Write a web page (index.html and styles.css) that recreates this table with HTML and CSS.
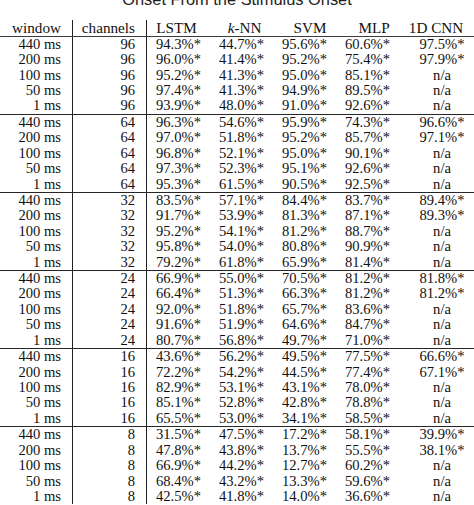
FILE: index.html
```html
<!DOCTYPE html>
<html>
<head>
<meta charset="utf-8">
<link rel="stylesheet" href="styles.css">
</head>
<body>
<div class="title">Onset From the Stimulus Onset</div>
<div class="table">
  <div class="row head">
    <div class="c1">window</div><div class="c2">channels</div>
    <div class="h h1">LSTM</div><div class="h h2"><i>k</i>-NN</div><div class="h h3">SVM</div><div class="h h4">MLP</div><div class="h h5">1D CNN</div>
  </div>
  <div class="group first">
    <div class="row"><div class="c1">440 ms</div><div class="c2">96</div><div class="v">94.3%*</div><div class="v">44.7%*</div><div class="v">95.6%*</div><div class="v">60.6%*</div><div class="cnn">97.5%*</div></div>
    <div class="row"><div class="c1">200 ms</div><div class="c2">96</div><div class="v">96.0%*</div><div class="v">41.4%*</div><div class="v">95.2%*</div><div class="v">75.4%*</div><div class="cnn">97.9%*</div></div>
    <div class="row"><div class="c1">100 ms</div><div class="c2">96</div><div class="v">95.2%*</div><div class="v">41.3%*</div><div class="v">95.0%*</div><div class="v">85.1%*</div><div class="cnn">n/a</div></div>
    <div class="row"><div class="c1">50 ms</div><div class="c2">96</div><div class="v">97.4%*</div><div class="v">41.3%*</div><div class="v">94.9%*</div><div class="v">89.5%*</div><div class="cnn">n/a</div></div>
    <div class="row"><div class="c1">1 ms</div><div class="c2">96</div><div class="v">93.9%*</div><div class="v">48.0%*</div><div class="v">91.0%*</div><div class="v">92.6%*</div><div class="cnn">n/a</div></div>
  </div>
  <div class="group">
    <div class="row"><div class="c1">440 ms</div><div class="c2">64</div><div class="v">96.3%*</div><div class="v">54.6%*</div><div class="v">95.9%*</div><div class="v">74.3%*</div><div class="cnn">96.6%*</div></div>
    <div class="row"><div class="c1">200 ms</div><div class="c2">64</div><div class="v">97.0%*</div><div class="v">51.8%*</div><div class="v">95.2%*</div><div class="v">85.7%*</div><div class="cnn">97.1%*</div></div>
    <div class="row"><div class="c1">100 ms</div><div class="c2">64</div><div class="v">96.8%*</div><div class="v">52.1%*</div><div class="v">95.0%*</div><div class="v">90.1%*</div><div class="cnn">n/a</div></div>
    <div class="row"><div class="c1">50 ms</div><div class="c2">64</div><div class="v">97.3%*</div><div class="v">52.3%*</div><div class="v">95.1%*</div><div class="v">92.6%*</div><div class="cnn">n/a</div></div>
    <div class="row"><div class="c1">1 ms</div><div class="c2">64</div><div class="v">95.3%*</div><div class="v">61.5%*</div><div class="v">90.5%*</div><div class="v">92.5%*</div><div class="cnn">n/a</div></div>
  </div>
  <div class="group">
    <div class="row"><div class="c1">440 ms</div><div class="c2">32</div><div class="v">83.5%*</div><div class="v">57.1%*</div><div class="v">84.4%*</div><div class="v">83.7%*</div><div class="cnn">89.4%*</div></div>
    <div class="row"><div class="c1">200 ms</div><div class="c2">32</div><div class="v">91.7%*</div><div class="v">53.9%*</div><div class="v">81.3%*</div><div class="v">87.1%*</div><div class="cnn">89.3%*</div></div>
    <div class="row"><div class="c1">100 ms</div><div class="c2">32</div><div class="v">95.2%*</div><div class="v">54.1%*</div><div class="v">81.2%*</div><div class="v">88.7%*</div><div class="cnn">n/a</div></div>
    <div class="row"><div class="c1">50 ms</div><div class="c2">32</div><div class="v">95.8%*</div><div class="v">54.0%*</div><div class="v">80.8%*</div><div class="v">90.9%*</div><div class="cnn">n/a</div></div>
    <div class="row"><div class="c1">1 ms</div><div class="c2">32</div><div class="v">79.2%*</div><div class="v">61.8%*</div><div class="v">65.9%*</div><div class="v">81.4%*</div><div class="cnn">n/a</div></div>
  </div>
  <div class="group">
    <div class="row"><div class="c1">440 ms</div><div class="c2">24</div><div class="v">66.9%*</div><div class="v">55.0%*</div><div class="v">70.5%*</div><div class="v">81.2%*</div><div class="cnn">81.8%*</div></div>
    <div class="row"><div class="c1">200 ms</div><div class="c2">24</div><div class="v">66.4%*</div><div class="v">51.3%*</div><div class="v">66.3%*</div><div class="v">81.2%*</div><div class="cnn">81.2%*</div></div>
    <div class="row"><div class="c1">100 ms</div><div class="c2">24</div><div class="v">92.0%*</div><div class="v">51.8%*</div><div class="v">65.7%*</div><div class="v">83.6%*</div><div class="cnn">n/a</div></div>
    <div class="row"><div class="c1">50 ms</div><div class="c2">24</div><div class="v">91.6%*</div><div class="v">51.9%*</div><div class="v">64.6%*</div><div class="v">84.7%*</div><div class="cnn">n/a</div></div>
    <div class="row"><div class="c1">1 ms</div><div class="c2">24</div><div class="v">80.7%*</div><div class="v">56.8%*</div><div class="v">49.7%*</div><div class="v">71.0%*</div><div class="cnn">n/a</div></div>
  </div>
  <div class="group">
    <div class="row"><div class="c1">440 ms</div><div class="c2">16</div><div class="v">43.6%*</div><div class="v">56.2%*</div><div class="v">49.5%*</div><div class="v">77.5%*</div><div class="cnn">66.6%*</div></div>
    <div class="row"><div class="c1">200 ms</div><div class="c2">16</div><div class="v">72.2%*</div><div class="v">54.2%*</div><div class="v">44.5%*</div><div class="v">77.4%*</div><div class="cnn">67.1%*</div></div>
    <div class="row"><div class="c1">100 ms</div><div class="c2">16</div><div class="v">82.9%*</div><div class="v">53.1%*</div><div class="v">43.1%*</div><div class="v">78.0%*</div><div class="cnn">n/a</div></div>
    <div class="row"><div class="c1">50 ms</div><div class="c2">16</div><div class="v">85.1%*</div><div class="v">52.8%*</div><div class="v">42.8%*</div><div class="v">78.8%*</div><div class="cnn">n/a</div></div>
    <div class="row"><div class="c1">1 ms</div><div class="c2">16</div><div class="v">65.5%*</div><div class="v">53.0%*</div><div class="v">34.1%*</div><div class="v">58.5%*</div><div class="cnn">n/a</div></div>
  </div>
  <div class="group">
    <div class="row"><div class="c1">440 ms</div><div class="c2">8</div><div class="v">31.5%*</div><div class="v">47.5%*</div><div class="v">17.2%*</div><div class="v">58.1%*</div><div class="cnn">39.9%*</div></div>
    <div class="row"><div class="c1">200 ms</div><div class="c2">8</div><div class="v">47.8%*</div><div class="v">43.8%*</div><div class="v">13.7%*</div><div class="v">55.5%*</div><div class="cnn">38.1%*</div></div>
    <div class="row"><div class="c1">100 ms</div><div class="c2">8</div><div class="v">66.9%*</div><div class="v">44.2%*</div><div class="v">12.7%*</div><div class="v">60.2%*</div><div class="cnn">n/a</div></div>
    <div class="row"><div class="c1">50 ms</div><div class="c2">8</div><div class="v">68.4%*</div><div class="v">43.2%*</div><div class="v">13.3%*</div><div class="v">59.6%*</div><div class="cnn">n/a</div></div>
    <div class="row"><div class="c1">1 ms</div><div class="c2">8</div><div class="v">42.5%*</div><div class="v">41.8%*</div><div class="v">14.0%*</div><div class="v">36.6%*</div><div class="cnn">n/a</div></div>
  </div>
</div>
</body>
</html>
```

FILE: styles.css
```css
html, body {
  margin: 0;
  padding: 0;
  background: #ffffff;
}
body {
  width: 474px;
  height: 505px;
  overflow: hidden;
  font-family: "Liberation Serif", "Times New Roman", serif;
  color: #111;
}
.title {
  font-family: "Liberation Sans", Arial, sans-serif;
  font-size: 16.4px;
  line-height: 18px;
  height: 18px;
  margin-top: -10px;
  text-align: center;
  color: #222;
}
.table {
  margin-top: 12px;
  font-size: 14.6px;
}
.row {
  display: grid;
  grid-template-columns: 73px 74px 63px 63px 63px 64px 74px;
  line-height: 15.42px;
  white-space: nowrap;
}
.head {
  font-size: 15.2px;
  line-height: 15.7px;
  border-bottom: 1px solid #3c3c3c;
}
.group {
  border-top: 1px solid #262626;
}
.group.first {
  border-top: none;
}
.c1, .c2 {
  box-sizing: border-box;
  text-align: right;
  padding-right: 11px;
  border-right: 1px solid #222;
}
.v {
  padding-left: 9px;
  text-align: left;
}
.cnn {
  padding-left: 10px;
  text-align: center;
}
.h { text-align: center; }
.h1 { padding-right: 4px; }
.h2 { padding-left: 6px; }
.h3 { padding-left: 11px; }
.h4 { padding-left: 12px; }
.h5 { padding-right: 2px; }
```
